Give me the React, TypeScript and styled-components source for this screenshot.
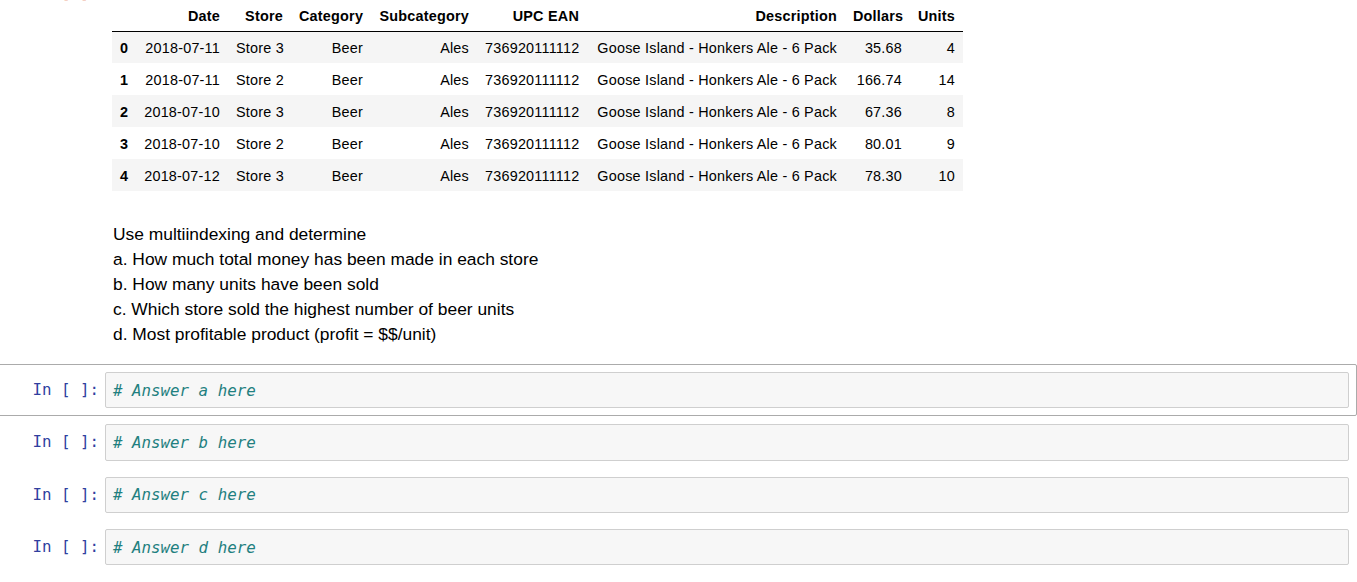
import React from "react";
import styled, { createGlobalStyle, css } from "styled-components";

const GlobalStyle = createGlobalStyle`
  html, body {
    margin: 0;
    padding: 0;
    background: #ffffff;
    overflow: hidden;
  }
  body {
    font-family: "Liberation Sans", Arial, sans-serif;
    color: #000;
  }
`;

const Notebook = styled.div`
  margin-left: -8px;
  display: flex;
  flex-direction: column;
`;

const Cell = styled.div<{ $selected?: boolean; $flushTop?: boolean }>`
  display: flex;
  align-items: flex-start;
  border: 1px solid ${(p) => (p.$selected ? "#ababab" : "transparent")};
  border-radius: 2px;
  padding: 7px;
  ${(p) =>
    p.$flushTop &&
    css`
      padding-top: 0;
      border-top: none;
    `}
`;

const Prompt = styled.div<{ $kind: "in" | "out" | "none" }>`
  flex: 0 0 105px;
  box-sizing: border-box;
  padding-right: 6px;
  text-align: right;
  font-family: "DejaVu Sans Mono", "Liberation Mono", monospace;
  font-size: 15.8px;
  white-space: pre;
  color: ${(p) => (p.$kind === "out" ? "#D84315" : "#303F9F")};
  ${(p) =>
    p.$kind === "in" &&
    css`
      height: 36.33px;
      line-height: 36.33px;
    `}
  ${(p) =>
    p.$kind === "out" &&
    css`
      line-height: 18px;
      margin-top: -16px;
    `}
`;

const OutputBody = styled.div`
  flex: 1;
  padding-left: 7px;
  margin-bottom: 14px;
`;

const DataTable = styled.table`
  border-collapse: collapse;
  border-spacing: 0;
  table-layout: fixed;
  width: 851px;
  font-family: "Liberation Sans", Arial, sans-serif;
  font-size: 14.4px;
  letter-spacing: 0.22px;
  color: #000;
`;

const HeadRow = styled.tr`
  height: 31px;
  border-bottom: 1px solid #000;
`;

const BodyRow = styled.tr<{ $striped: boolean }>`
  height: 32px;
  background: ${(p) => (p.$striped ? "#f5f5f5" : "#ffffff")};
`;

const cellBase = css`
  padding: 1px 8px 0;
  text-align: right;
  vertical-align: middle;
  white-space: nowrap;
`;

const HeadCell = styled.th`
  ${cellBase}
  font-weight: bold;
`;

const IndexCell = styled.th`
  ${cellBase}
  font-weight: bold;
`;

const DataCell = styled.td`
  ${cellBase}
`;

const Markdown = styled.div`
  flex: 1;
  padding-left: 8px;
  padding-top: 1px;
  margin-bottom: 9px;
  font-family: "Liberation Sans", Arial, sans-serif;
  font-size: 17.4px;
  line-height: 25px;
  color: #000;
`;

const InputArea = styled.div`
  flex: 1;
  box-sizing: border-box;
  height: 36.33px;
  display: flex;
  align-items: center;
  padding: 0 7px;
  background: #f7f7f7;
  border: 1px solid #cfcfcf;
  border-radius: 2px;
`;

const Comment = styled.span`
  font-family: "DejaVu Sans Mono", "Liberation Mono", monospace;
  font-size: 15.8px;
  font-style: italic;
  color: #1f8080;
  white-space: pre;
`;

const columns = [
  { key: "idx", label: "", width: 24 },
  { key: "Date", label: "Date", width: 92 },
  { key: "Store", label: "Store", width: 63 },
  { key: "Category", label: "Category", width: 80 },
  { key: "Subcategory", label: "Subcategory", width: 106 },
  { key: "UPC", label: "UPC EAN", width: 110 },
  { key: "Description", label: "Description", width: 258 },
  { key: "Dollars", label: "Dollars", width: 65 },
  { key: "Units", label: "Units", width: 53 },
];

const rows = [
  ["2018-07-11", "Store 3", "35.68", "4"],
  ["2018-07-11", "Store 2", "166.74", "14"],
  ["2018-07-10", "Store 3", "67.36", "8"],
  ["2018-07-10", "Store 2", "80.01", "9"],
  ["2018-07-12", "Store 3", "78.30", "10"],
];

const questions = [
  "Use multiindexing and determine",
  "a. How much total money has been made in each store",
  "b. How many units have been sold",
  "c. Which store sold the highest number of beer units",
  "d. Most profitable product (profit = $$/unit)",
];

const answers = ["a", "b", "c", "d"];

export default function App() {
  return (
    <>
      <GlobalStyle />
      <Notebook>
        <Cell $flushTop>
          <Prompt $kind="out">Out[ ]:</Prompt>
          <OutputBody>
            <DataTable>
              <colgroup>
                {columns.map((c) => (
                  <col key={c.key} style={{ width: c.width }} />
                ))}
              </colgroup>
              <thead>
                <HeadRow>
                  {columns.map((c) => (
                    <HeadCell key={c.key}>{c.label}</HeadCell>
                  ))}
                </HeadRow>
              </thead>
              <tbody>
                {rows.map((r, i) => (
                  <BodyRow key={i} $striped={i % 2 === 0}>
                    <IndexCell>{i}</IndexCell>
                    <DataCell>{r[0]}</DataCell>
                    <DataCell>{r[1]}</DataCell>
                    <DataCell>Beer</DataCell>
                    <DataCell>Ales</DataCell>
                    <DataCell>736920111112</DataCell>
                    <DataCell>Goose Island - Honkers Ale - 6 Pack</DataCell>
                    <DataCell>{r[2]}</DataCell>
                    <DataCell>{r[3]}</DataCell>
                  </BodyRow>
                ))}
              </tbody>
            </DataTable>
          </OutputBody>
        </Cell>
        <Cell>
          <Prompt $kind="none" />
          <Markdown>
            {questions.map((q) => (
              <div key={q}>{q}</div>
            ))}
          </Markdown>
        </Cell>
        {answers.map((a, i) => (
          <Cell key={a} $selected={i === 0}>
            <Prompt $kind="in">In [ ]:</Prompt>
            <InputArea>
              <Comment># Answer {a} here</Comment>
            </InputArea>
          </Cell>
        ))}
      </Notebook>
    </>
  );
}
